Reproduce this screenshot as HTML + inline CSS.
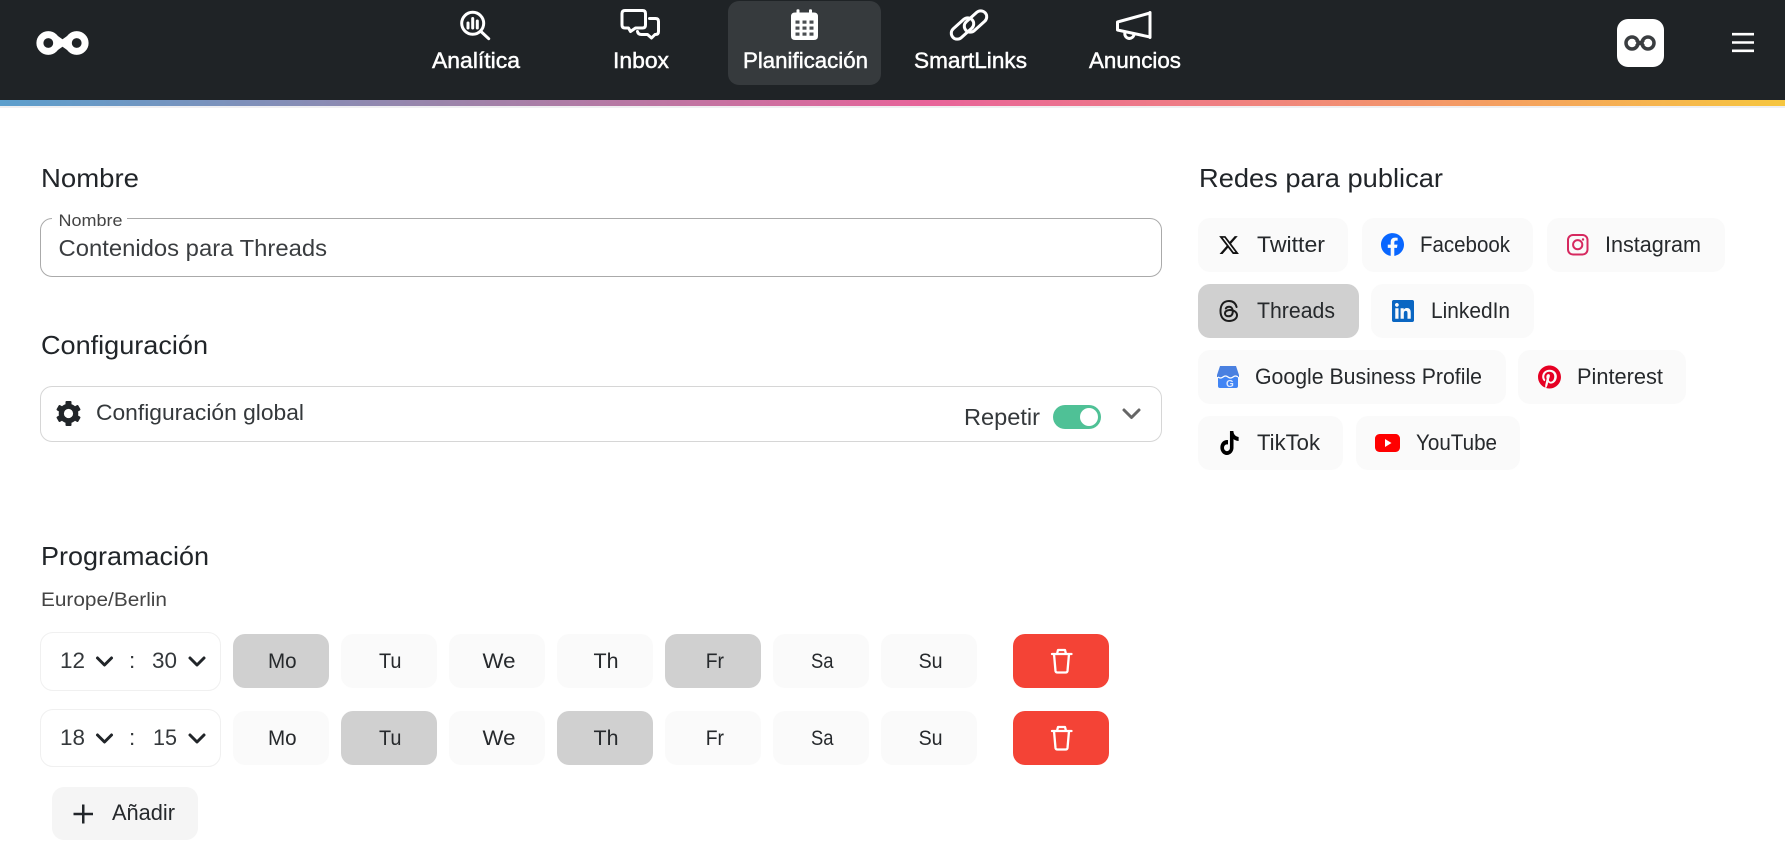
<!DOCTYPE html>
<html lang="es">
<head>
<meta charset="utf-8">
<title>Planificación</title>
<style>
html,body{margin:0;padding:0;background:#fff}
body{position:relative;width:1785px;height:863px;overflow:hidden;font-family:"Liberation Sans",sans-serif}
.b{position:absolute;box-sizing:border-box}
.c{background:#fafafa;border-radius:12px}
.on{background:#d0d0d0;border-radius:12px}
.del{background:#f44336;border-radius:12px}
.tm{background:#fff;border:1px solid #f0f0f0;border-radius:13px}
svg.o{position:absolute;left:0;top:0}
text{font-family:"Liberation Sans",sans-serif;fill:#212529}
.nav text{fill:#fff;font-size:22px;stroke:#fff;stroke-width:.45px}
.t{font-size:26px}
.ch{font-size:22px;fill:#26292c}
.d{font-size:21px;fill:#26292c}
.n{font-size:22.5px;fill:#34383b}
.w{fill:none;stroke:#fff;stroke-width:3;stroke-linecap:round;stroke-linejoin:round}
.k{fill:none;stroke:#212529;stroke-width:3;stroke-linecap:round;stroke-linejoin:round}
</style>
</head>
<body>
<div class="b" style="left:0;top:0;width:1785px;height:100px;background:#1f2326"></div>
<div class="b" style="left:0;top:100px;width:1785px;height:6px;background:linear-gradient(90deg,#5c9fcd 0%,#9b84aa 25%,#e8649a 52%,#ef7f83 68%,#f5a25f 85%,#f6c63f 100%)"></div>
<div class="b" style="left:0;top:106px;width:1785px;height:2px;background:#efeff1"></div>
<div class="b" style="left:728px;top:1px;width:153px;height:84px;background:#363a3d;border-radius:11px"></div>
<div class="b" style="left:1617px;top:19px;width:47px;height:48px;background:#fff;border-radius:11px"></div>

<div class="b" style="left:40px;top:218px;width:1122px;height:59px;border:1px solid #aaa;border-radius:12px"></div>
<div class="b" style="left:52px;top:215px;width:75px;height:6px;background:#fff"></div>
<div class="b" style="left:40px;top:386px;width:1122px;height:56px;border:1px solid #d6d6d6;border-radius:12px"></div>
<div class="b" style="left:1053px;top:405px;width:48px;height:24px;background:#4fc196;border-radius:12px"></div>
<div class="b" style="left:1080px;top:408px;width:18px;height:18px;background:#fff;border-radius:50%"></div>

<div class="b c" style="left:1198px;top:218px;width:150px;height:54px"></div>
<div class="b c" style="left:1362px;top:218px;width:171px;height:54px"></div>
<div class="b c" style="left:1547px;top:218px;width:178px;height:54px"></div>
<div class="b on" style="left:1198px;top:284px;width:161px;height:54px"></div>
<div class="b c" style="left:1371px;top:284px;width:163px;height:54px"></div>
<div class="b c" style="left:1198px;top:350px;width:308px;height:54px"></div>
<div class="b c" style="left:1518px;top:350px;width:168px;height:54px"></div>
<div class="b c" style="left:1198px;top:416px;width:145px;height:54px"></div>
<div class="b c" style="left:1356px;top:416px;width:164px;height:54px"></div>

<div class="b tm" style="left:40px;top:632px;width:181px;height:59px"></div>
<div class="b on" style="left:233px;top:634px;width:96px;height:54px"></div>
<div class="b c" style="left:341px;top:634px;width:96px;height:54px"></div>
<div class="b c" style="left:449px;top:634px;width:96px;height:54px"></div>
<div class="b c" style="left:557px;top:634px;width:96px;height:54px"></div>
<div class="b on" style="left:665px;top:634px;width:96px;height:54px"></div>
<div class="b c" style="left:773px;top:634px;width:96px;height:54px"></div>
<div class="b c" style="left:881px;top:634px;width:96px;height:54px"></div>
<div class="b del" style="left:1013px;top:634px;width:96px;height:54px"></div>

<div class="b tm" style="left:40px;top:709px;width:181px;height:58px"></div>
<div class="b c" style="left:233px;top:711px;width:96px;height:54px"></div>
<div class="b on" style="left:341px;top:711px;width:96px;height:54px"></div>
<div class="b c" style="left:449px;top:711px;width:96px;height:54px"></div>
<div class="b on" style="left:557px;top:711px;width:96px;height:54px"></div>
<div class="b c" style="left:665px;top:711px;width:96px;height:54px"></div>
<div class="b c" style="left:773px;top:711px;width:96px;height:54px"></div>
<div class="b c" style="left:881px;top:711px;width:96px;height:54px"></div>
<div class="b del" style="left:1013px;top:711px;width:96px;height:54px"></div>

<div class="b" style="left:52px;top:787px;width:146px;height:53px;background:#f5f5f5;border-radius:12px"></div>

<svg class="o" width="1785" height="863" viewBox="0 0 1785 863" xmlns="http://www.w3.org/2000/svg">
<!-- logo -->
<g fill="none" stroke="#fff" stroke-width="7">
<circle cx="48.300" cy="43" r="8.400"/><circle cx="76.700" cy="43" r="8.400"/>
<path d="M54 37L71 49M54 49L71 37" stroke-width="6"/>
</g>
<g fill="none" stroke="#3a3d40" stroke-width="3.500">
<circle cx="1632" cy="43" r="6"/><circle cx="1648" cy="43" r="6"/>
<path d="M1636 40L1644 46M1636 46L1644 40" stroke-width="3"/>
</g>
<!-- nav icons -->
<circle class="w" cx="472.700" cy="23.300" r="11"/>
<path class="w" d="M481 31.500L488.700 38.700M468 23V28M472.700 18.500V28M477.300 21V28"/>
<path class="w" d="M625 10.500H642.500Q645.500 10.500 645.500 13.500V25Q645.500 28 642.500 28H635.500L630.500 31.500L628.500 28H625Q622 28 622 25V13.500Q622 10.500 625 10.500Z"/>
<path class="w" d="M649.500 18.500H655.500Q658.500 18.500 658.500 21.500V31.500Q658.500 34.500 655.500 34.500H655L651.500 38L647.500 34.500H641.500Q638 34.500 637.500 31.500"/>
<path fill="#fff" d="M795 12.500H796.500V10.500Q796.500 9.300 798 9.300Q799.500 9.300 799.500 10.500V12.500H809V10.500Q809 9.300 810.500 9.300Q812 9.300 812 10.500V12.500H814Q818 12.500 818 16.500V36Q818 40 814 40H795Q791 40 791 36V16.500Q791 12.500 795 12.500Z"/>
<g fill="#4a4e51"><rect x="795.500" y="20.500" width="4" height="3.200"/><rect x="802.500" y="20.500" width="4" height="3.200"/><rect x="809.500" y="20.500" width="4" height="3.200"/><rect x="795.500" y="26.500" width="4" height="3.200"/><rect x="802.500" y="26.500" width="4" height="3.200"/><rect x="809.500" y="26.500" width="4" height="3.200"/><rect x="795.500" y="32.500" width="4" height="3.200"/><rect x="802.500" y="32.500" width="4" height="3.200"/><rect x="809.500" y="32.500" width="4" height="3.200"/></g>
<g fill="none" stroke="#fff" stroke-width="3">
<rect x="-13" y="-6" width="26" height="12" rx="6" transform="translate(962.500 28.500) rotate(-42)"/>
<rect x="-13" y="-6" width="26" height="12" rx="6" transform="translate(975.500 21.500) rotate(-42)"/>
</g>
<path class="w" d="M1150 12.500V37.500M1150 13L1117.500 22V30L1150 37M1125 32.500A4.600 4.600 0 1 0 1134 34"/>
<path d="M1732 34.200H1754M1732 42.500H1754M1732 50.800H1754" stroke="#fff" stroke-width="2.600" fill="none"/>
<!-- nav text -->
<g class="nav">
<text x="432" y="68" textLength="88" lengthAdjust="spacingAndGlyphs">Analítica</text>
<text x="613" y="68" textLength="56" lengthAdjust="spacingAndGlyphs">Inbox</text>
<text x="743" y="68" textLength="125" lengthAdjust="spacingAndGlyphs">Planificación</text>
<text x="914" y="68" textLength="113" lengthAdjust="spacingAndGlyphs">SmartLinks</text>
<text x="1089" y="68" textLength="92" lengthAdjust="spacingAndGlyphs">Anuncios</text>
</g>
<!-- titles -->
<text class="t" x="41" y="187" textLength="98" lengthAdjust="spacingAndGlyphs">Nombre</text>
<text class="t" x="41" y="354" textLength="167" lengthAdjust="spacingAndGlyphs">Configuración</text>
<text class="t" x="41" y="565" textLength="168" lengthAdjust="spacingAndGlyphs">Programación</text>
<text class="t" x="1199" y="187" textLength="244" lengthAdjust="spacingAndGlyphs">Redes para publicar</text>
<!-- name field -->
<text x="58.500" y="226" font-size="17" style="fill:#444" textLength="64" lengthAdjust="spacingAndGlyphs">Nombre</text>
<text x="58.500" y="256" font-size="23.500" style="fill:#3a3d40" textLength="268.500" lengthAdjust="spacingAndGlyphs">Contenidos para Threads</text>
<!-- config -->
<g transform="translate(68.500 413.500)" fill="#212529">
<circle r="7.200" fill="none" stroke="#212529" stroke-width="5.200"/>
<rect x="-3" y="-12.500" width="6" height="5" rx="1"/>
<rect x="-3" y="-12.500" width="6" height="5" rx="1" transform="rotate(60)"/>
<rect x="-3" y="-12.500" width="6" height="5" rx="1" transform="rotate(120)"/>
<rect x="-3" y="-12.500" width="6" height="5" rx="1" transform="rotate(180)"/>
<rect x="-3" y="-12.500" width="6" height="5" rx="1" transform="rotate(240)"/>
<rect x="-3" y="-12.500" width="6" height="5" rx="1" transform="rotate(300)"/>
</g>
<text class="ch" x="96" y="420" style="fill:#34383b" textLength="208" lengthAdjust="spacingAndGlyphs">Configuración global</text>
<text x="964" y="425" font-size="23" style="fill:#34383b" textLength="76" lengthAdjust="spacingAndGlyphs">Repetir</text>
<path d="M1124 410L1131.500 417.500L1139 410" fill="none" stroke="#666" stroke-width="3" stroke-linecap="round" stroke-linejoin="round"/>
<!-- network icons -->
<svg x="1218" y="234" width="22" height="22" viewBox="0 0 24 24"><path fill="#111" d="M18.244 2.25h3.308l-7.227 8.26 8.502 11.24H16.17l-5.214-6.817L4.99 21.75H1.68l7.73-8.835L1.254 2.25H8.08l4.713 6.231zm-1.161 17.52h1.833L7.084 4.126H5.117z"/></svg>
<text class="ch" x="1257" y="252" textLength="68" lengthAdjust="spacingAndGlyphs">Twitter</text>
<svg x="1381" y="233" width="23" height="23" viewBox="0 0 24 24"><path fill="#0866ff" d="M24 12.073c0-6.627-5.373-12-12-12s-12 5.373-12 12c0 5.99 4.388 10.954 10.125 11.854v-8.385H7.078v-3.47h3.047V9.43c0-3.007 1.792-4.669 4.533-4.669 1.312 0 2.686.235 2.686.235v2.953H15.83c-1.491 0-1.956.925-1.956 1.874v2.25h3.328l-.532 3.47h-2.796v8.385C19.612 23.027 24 18.062 24 12.073z"/></svg>
<text class="ch" x="1420" y="252" textLength="90" lengthAdjust="spacingAndGlyphs">Facebook</text>
<g fill="none" stroke="#d6295f" stroke-width="2"><rect x="1568" y="235" width="19.500" height="19.500" rx="5"/><circle cx="1577.700" cy="244.700" r="4.600"/></g><circle cx="1583" cy="239.500" r="1.200" fill="#d6295f"/>
<text class="ch" x="1605" y="252" textLength="96" lengthAdjust="spacingAndGlyphs">Instagram</text>
<svg x="1217" y="298.500" width="24" height="25" viewBox="0 0 24 24"><path fill="none" stroke="#1c1c1c" stroke-width="2" stroke-linecap="round" d="M19.600 8C18.500 4 15.600 2 12 2C6 2 3.500 6.500 3.500 12C3.500 18 6.500 22 12 22C16.500 22 20 19.800 20 16.300C20 12.800 16.500 11 12.800 11C9.600 11 8 12.700 8 14.500C8 16.300 9.700 17.300 11.500 17.300C14.200 17.300 15.800 15.500 15.800 12.500C15.800 9.500 14.200 7.800 12.100 7.800C10.700 7.800 9.500 8.300 8.800 9.500"/></svg>
<text class="ch" x="1257" y="318" textLength="78" lengthAdjust="spacingAndGlyphs">Threads</text>
<svg x="1392" y="300" width="22" height="22" viewBox="0 0 24 24"><path fill="#0a66c2" d="M20.447 20.452h-3.554v-5.569c0-1.328-.027-3.037-1.852-3.037-1.853 0-2.136 1.445-2.136 2.939v5.667H9.351V9h3.414v1.561h.046c.477-.9 1.637-1.85 3.37-1.85 3.601 0 4.267 2.37 4.267 5.455v6.286zM5.337 7.433c-1.144 0-2.063-.926-2.063-2.065 0-1.138.92-2.063 2.063-2.063 1.14 0 2.064.925 2.064 2.063 0 1.139-.925 2.065-2.064 2.065zm1.782 13.019H3.555V9h3.564v11.452zM22.225 0H1.771C.792 0 0 .774 0 1.729v20.542C0 23.227.792 24 1.771 24h20.451C23.2 24 24 23.227 24 22.271V1.729C24 .774 23.2 0 22.222 0h.003z"/></svg>
<text class="ch" x="1431" y="318" textLength="79" lengthAdjust="spacingAndGlyphs">LinkedIn</text>
<path d="M1218 374H1238V386Q1238 388 1236 388H1220Q1218 388 1218 386Z" fill="#4285f4"/>
<path d="M1220 366H1236L1239 375V377H1217V375Z" fill="#4a80e0"/>
<path d="M1218 377q2.500 2 5 0t5 0t5 0t5 0" fill="none" stroke="#fff" stroke-width="1.200"/>
<text x="1226" y="387" font-size="10" font-weight="700" style="fill:#dfe9fd">G</text>
<text class="ch" x="1255" y="384" textLength="227" lengthAdjust="spacingAndGlyphs">Google Business Profile</text>
<svg x="1538" y="365" width="23" height="24" viewBox="0 0 24 24"><path fill="#e60023" d="M12.017 0C5.396 0 .029 5.367.029 11.987c0 5.079 3.158 9.417 7.618 11.162-.105-.949-.199-2.403.041-3.439.219-.937 1.406-5.957 1.406-5.957s-.359-.72-.359-1.781c0-1.663.967-2.911 2.168-2.911 1.024 0 1.518.769 1.518 1.688 0 1.029-.653 2.567-.992 3.992-.285 1.193.6 2.165 1.775 2.165 2.128 0 3.768-2.245 3.768-5.487 0-2.861-2.063-4.869-5.008-4.869-3.41 0-5.409 2.562-5.409 5.199 0 1.033.394 2.143.889 2.741.099.12.112.225.085.345-.09.375-.293 1.199-.334 1.363-.053.225-.172.271-.401.165-1.495-.69-2.433-2.878-2.433-4.646 0-3.776 2.748-7.252 7.92-7.252 4.158 0 7.392 2.967 7.392 6.923 0 4.135-2.607 7.462-6.233 7.462-1.214 0-2.354-.629-2.758-1.379l-.749 2.848c-.269 1.045-1.004 2.352-1.498 3.146 1.123.345 2.306.535 3.55.535 6.607 0 11.985-5.365 11.985-11.987C23.97 5.39 18.592.026 11.985.026L12.017 0z"/></svg>
<text class="ch" x="1577" y="384" textLength="86" lengthAdjust="spacingAndGlyphs">Pinterest</text>
<svg x="1219" y="431" width="21" height="24" viewBox="0 0 24 24" preserveAspectRatio="none"><path fill="#000" d="M12.525.02c1.31-.02 2.61-.01 3.91-.02.08 1.53.63 3.09 1.75 4.17 1.12 1.11 2.7 1.62 4.24 1.79v4.03c-1.44-.05-2.89-.35-4.2-.97-.57-.26-1.1-.59-1.62-.93-.01 2.92.01 5.84-.02 8.75-.08 1.4-.54 2.79-1.35 3.94-1.31 1.92-3.58 3.17-5.91 3.21-1.43.08-2.86-.31-4.08-1.03-2.02-1.19-3.44-3.37-3.65-5.71-.02-.5-.03-1-.01-1.49.18-1.9 1.12-3.72 2.58-4.96 1.66-1.44 3.98-2.13 6.15-1.72.02 1.48-.04 2.96-.04 4.44-.99-.32-2.15-.23-3.02.37-.63.41-1.11 1.04-1.36 1.75-.21.51-.15 1.07-.14 1.61.24 1.64 1.82 3.02 3.5 2.87 1.12-.01 2.19-.66 2.77-1.61.19-.33.4-.67.41-1.06.1-1.79.06-3.57.07-5.36.01-4.03-.01-8.05.02-12.07z"/></svg>
<text class="ch" x="1257" y="450" textLength="63" lengthAdjust="spacingAndGlyphs">TikTok</text>
<rect x="1375" y="434" width="25" height="18" rx="4.500" fill="#f00"/><path d="M1385 439L1391.500 443L1385 447Z" fill="#fff"/>
<text class="ch" x="1416" y="450" textLength="81" lengthAdjust="spacingAndGlyphs">YouTube</text>
<!-- schedule -->
<text x="41" y="606" font-size="19.500" style="fill:#444" textLength="126" lengthAdjust="spacingAndGlyphs">Europe/Berlin</text>
<g>
<text class="n" x="60" y="668" textLength="25" lengthAdjust="spacingAndGlyphs">12</text>
<path class="k" d="M97.500 658L104.500 665L111.500 658"/>
<text class="n" x="129" y="668">:</text>
<text class="n" x="152" y="668" textLength="25" lengthAdjust="spacingAndGlyphs">30</text>
<path class="k" d="M190 658L197 665L204 658"/>
<text class="n" x="60" y="745" textLength="25" lengthAdjust="spacingAndGlyphs">18</text>
<path class="k" d="M97.500 735L104.500 742L111.500 735"/>
<text class="n" x="129" y="745">:</text>
<text class="n" x="153" y="745" textLength="24" lengthAdjust="spacingAndGlyphs">15</text>
<path class="k" d="M190 735L197 742L204 735"/>
</g>
<g>
<text class="d" x="268" y="668" textLength="28.600" lengthAdjust="spacingAndGlyphs">Mo</text>
<text class="d" x="379" y="668" textLength="22.500" lengthAdjust="spacingAndGlyphs">Tu</text>
<text class="d" x="482.500" y="668" textLength="33" lengthAdjust="spacingAndGlyphs">We</text>
<text class="d" x="593.500" y="668" textLength="25" lengthAdjust="spacingAndGlyphs">Th</text>
<text class="d" x="705.700" y="668" textLength="18.300" lengthAdjust="spacingAndGlyphs">Fr</text>
<text class="d" x="811" y="668" textLength="22.500" lengthAdjust="spacingAndGlyphs">Sa</text>
<text class="d" x="918.600" y="668" textLength="24" lengthAdjust="spacingAndGlyphs">Su</text>
<text class="d" x="268" y="745" textLength="28.600" lengthAdjust="spacingAndGlyphs">Mo</text>
<text class="d" x="379" y="745" textLength="22.500" lengthAdjust="spacingAndGlyphs">Tu</text>
<text class="d" x="482.500" y="745" textLength="33" lengthAdjust="spacingAndGlyphs">We</text>
<text class="d" x="593.500" y="745" textLength="25" lengthAdjust="spacingAndGlyphs">Th</text>
<text class="d" x="705.700" y="745" textLength="18.300" lengthAdjust="spacingAndGlyphs">Fr</text>
<text class="d" x="811" y="745" textLength="22.500" lengthAdjust="spacingAndGlyphs">Sa</text>
<text class="d" x="918.600" y="745" textLength="24" lengthAdjust="spacingAndGlyphs">Su</text>
</g>
<!-- trash -->
<g fill="none" stroke="#fff" stroke-width="2.300" stroke-linejoin="round" stroke-linecap="round">
<path d="M1052 654H1071.500M1057 654L1058 650H1065L1066 654M1054 654L1055.500 671Q1055.700 672.500 1057.500 672.500H1065.500Q1067.300 672.500 1067.500 671L1069 654"/>
<path d="M1052 731H1071.500M1057 731L1058 727H1065L1066 731M1054 731L1055.500 748Q1055.700 749.500 1057.500 749.500H1065.500Q1067.300 749.500 1067.500 748L1069 731"/>
</g>
<path d="M73.500 814H93M83.250 804.500V823.500" stroke="#212529" stroke-width="2.500" fill="none"/>
<text class="ch" x="112" y="820" textLength="63" lengthAdjust="spacingAndGlyphs">Añadir</text>
</svg>
</body>
</html>
